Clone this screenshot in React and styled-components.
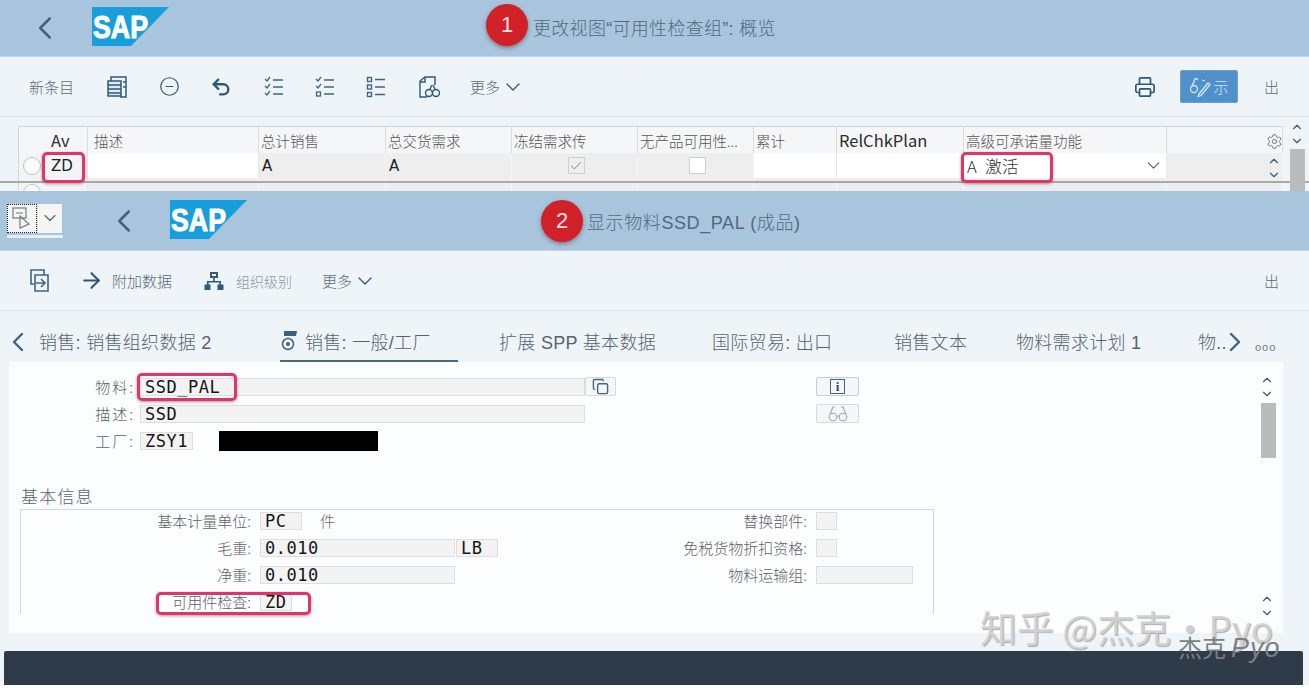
import React from 'react';
import styled, { createGlobalStyle } from 'styled-components';
import { ChevronLeft, ChevronRight, ChevronDown, ChevronUp, CircleMinus, Undo2, Printer, Settings, ArrowRight, Copy, Check } from 'lucide-react';

const cjk = '"Noto Sans CJK SC", "Noto Sans", sans-serif';
const latin = '"Liberation Sans", "Noto Sans CJK SC", sans-serif';
const mono = '"DejaVu Sans Mono", "Liberation Mono", monospace';

const GlobalStyle = createGlobalStyle`
  html, body { margin: 0; padding: 0; background: #fff; }
  body { font-family: ${cjk}; color: #56606b; }
`;

const Page = styled.div`
  position: relative;
  width: 1309px;
  height: 688px;
  overflow: hidden;
  background: #eff4f9;
`;

const Window = styled.section`
  position: relative;
  height: ${(p) => p.$h}px;
  overflow: hidden;
`;

const Shell = styled.header`
  display: flex;
  align-items: center;
  height: ${(p) => p.$h}px;
  background: #a9c5de;
  border-bottom: 1px solid #c4d6e6;
  box-sizing: border-box;
`;

const BackBtn = styled.span`
  display: flex;
  color: #3d6385;
  margin-left: ${(p) => p.$ml}px;
`;

const LogoBox = styled.svg`
  display: block;
  margin-left: ${(p) => p.$ml}px;
  margin-top: ${(p) => p.$mt || 0}px;
`;

const Title = styled.h1`
  margin: ${(p) => p.$mt || 0}px 0 0 ${(p) => p.$ml}px;
  font: 300 18px ${latin};
  letter-spacing: ${(p) => p.$ls}px;
  color: #4f6a80;
  white-space: nowrap;
`;

const Bar = styled.div`
  display: flex;
  align-items: center;
  height: 60px;
  padding-right: 30px;
  border-bottom: 1px solid #dbe4ea;
  box-sizing: border-box;
`;

const ToolText = styled.span`
  margin-left: ${(p) => p.$ml || 0}px;
  font-size: ${(p) => p.$size || 15}px;
  font-weight: 300;
  color: ${(p) => p.$color || '#5b6b78'};
  white-space: nowrap;
`;

const ToolIcon = styled.span`
  display: flex;
  margin-left: ${(p) => p.$ml}px;
  color: #2f5878;
`;

const Spacer = styled.div`
  flex: 1;
`;

const PrimaryBtn = styled.button`
  display: flex;
  align-items: center;
  justify-content: center;
  gap: 2px;
  width: 58px;
  height: 33px;
  margin: 0 26px 0 24px;
  padding: 0;
  border: 1px solid #6f9fc9;
  border-radius: 2px;
  background: #5090cb;
  color: #d7e8f7;
  font: 300 15px ${cjk};
`;

const TableArea = styled.div`
  display: flex;
  padding: 9px 4px 0 18px;
  height: 73px;
  box-sizing: border-box;
`;

const Table = styled.div`
  width: 1265px;
  display: grid;
  grid-template-columns: 69px 171px 127px 126px 126px 116px 83px 127px 203px 1fr;
  grid-template-rows: 26px 25px 30px;
  border-left: 1px solid #d5d5d5;
  border-top: 1px solid #d5d5d5;
  box-sizing: border-box;
`;

const HeadCell = styled.div`
  display: flex;
  align-items: center;
  padding-left: ${(p) => p.$pl || 2}px;
  background: #f5f6f7;
  border-right: 1px solid #dcdcdc;
  font-size: ${(p) => (p.$latin ? 16.5 : 14.5)}px;
  font-weight: ${(p) => (p.$latin ? 400 : 300)};
  color: ${(p) => (p.$latin ? '#2b2b2b' : '#555')};
  white-space: nowrap;
  overflow: hidden;
`;

const Cell = styled.div`
  display: flex;
  align-items: center;
  padding-left: 3px;
  box-sizing: border-box;
  justify-content: ${(p) => (p.$center ? 'center' : 'flex-start')};
  background: ${(p) => (p.$grey ? '#eeeeee' : '#fff')};
  border-right: 1px solid ${(p) => (p.$grey ? '#f6f6f6' : '#e6e6e6')};
  font: 15px "DejaVu Sans", sans-serif;
  color: #222;
`;

const SelectCell = styled(Cell)`
  gap: 10px;
  padding-left: 4px;
  background: #f3f4f5;
`;

const StatusText = styled.span`
  font: 300 16.5px ${cjk};
  letter-spacing: 0.4px;
  color: #333;
`;

const Radio = styled.span`
  flex: none;
  width: 18px;
  height: 18px;
  border-radius: 50%;
  border: 1px solid #bfc4c7;
  background: #fbfbfb;
  box-sizing: border-box;
`;

const CheckBox = styled.span`
  display: flex;
  align-items: center;
  justify-content: center;
  width: 17px;
  height: 17px;
  border: 1px solid #cfcfcf;
  background: ${(p) => (p.$off ? '#fff' : '#eee')};
  color: #777;
  box-sizing: border-box;
`;

const ChevronPair = styled.span`
  display: flex;
  flex-direction: column;
  align-items: center;
  color: #3b5a75;
`;

const ScrollRail = styled.div`
  position: absolute;
  left: ${(p) => p.$x}px;
  top: ${(p) => p.$y}px;
  width: 15px;
  height: ${(p) => p.$h}px;
  background: #b9bbbd;
`;

const OverlayChevrons = styled.div`
  position: absolute;
  left: ${(p) => p.$x}px;
  top: ${(p) => p.$y}px;
`;

const Seam = styled.div`
  position: absolute;
  left: 0;
  right: 0;
  top: 181px;
  height: 2px;
  background: #a9a9a6;
`;

const MenuControl = styled.div`
  display: flex;
  margin: 0 0 0 7px;
  width: 56px;
  height: 34px;
  border-bottom: 3px solid #e9eff5;
  box-sizing: border-box;
`;

const MenuIcon = styled.span`
  display: flex;
  align-items: center;
  justify-content: center;
  width: 30px;
  height: 29px;
  background: #f5f5f3;
  border: 1px dotted #222;
  box-sizing: border-box;
`;

const MenuArrow = styled.span`
  display: flex;
  align-items: center;
  justify-content: center;
  width: 25px;
  height: 29px;
  background: #f5f5f3;
  color: #47637a;
  border-left: 1px solid #ddd;
  box-sizing: border-box;
`;

const TabBar = styled.nav`
  display: flex;
  align-items: flex-end;
  height: 51px;
  padding-left: 2px;
  box-sizing: border-box;
`;

const TabChevron = styled.span`
  display: flex;
  margin-left: ${(p) => p.$ml || 0}px;
  margin-bottom: 4px;
  color: #3d6385;
`;

const Tab = styled.div`
  display: flex;
  align-items: center;
  flex: none;
  gap: 7px;
  height: 50px;
  padding: 10px 0 0 ${(p) => (p.$active ? 1 : 0)}px;
  margin-left: ${(p) => p.$ml || 0}px;
  width: ${(p) => p.$w}px;
  border-bottom: 2px solid ${(p) => (p.$active ? '#47677f' : 'transparent')};
  font: 300 18px ${latin};
  letter-spacing: 0.3px;
  color: #55646f;
  white-space: nowrap;
  box-sizing: border-box;
`;

const Sheet = styled.main`
  position: relative;
  margin-left: 9px;
  width: 1274px;
  height: 271px;
  padding: 16px 0 0 11px;
  background: #fcfdfe;
  box-sizing: border-box;
`;

const TopRows = styled.div`
  display: flex;
  flex-direction: column;
  gap: 10px;
  width: 840px;
`;

const Row = styled.div`
  display: flex;
  align-items: center;
  height: 17px;
`;

const Label = styled.label`
  flex: none;
  width: ${(p) => p.$w}px;
  padding-right: ${(p) => p.$pr || 7}px;
  box-sizing: border-box;
  text-align: right;
  font-size: 15px;
  font-weight: 300;
  letter-spacing: ${(p) => p.$ls || 0}px;
  color: #5d6367;
  white-space: nowrap;
`;

const Field = styled.span`
  display: flex;
  align-items: center;
  flex: none;
  width: ${(p) => p.$w}px;
  height: 18px;
  margin-left: ${(p) => p.$ml || 0}px;
  padding-left: 4px;
  box-sizing: border-box;
  background: #f3f3f3;
  border: 1px solid #dedede;
  font: 17px ${mono};
  color: #161616;
  letter-spacing: 0.5px;
`;

const IconBtn = styled.button`
  display: flex;
  align-items: center;
  justify-content: center;
  flex: none;
  width: ${(p) => p.$w}px;
  height: 19px;
  margin-left: ${(p) => p.$ml || 0}px;
  padding: 0;
  border: 1px solid ${(p) => (p.$muted ? '#dadada' : '#c7cdd2')};
  border-radius: 2px;
  background: #f5f6f7;
  color: ${(p) => (p.$muted ? '#98a9b6' : '#45657e')};
`;

const InfoGlyph = styled.span`
  display: block;
  width: 15px;
  height: 15px;
  border: 1px solid #45657e;
  box-sizing: border-box;
  font: bold 13px/13px "Liberation Serif", serif;
  color: #274a66;
  text-align: center;
`;

const Redacted = styled.span`
  width: 159px;
  height: 20px;
  margin-left: 26px;
  background: #000;
`;

const GroupTitle = styled.h2`
  margin: 36px 0 3px 1px;
  font-size: 17px;
  font-weight: 300;
  letter-spacing: 1.2px;
  line-height: 21px;
  color: #55626c;
`;

const GroupBox = styled.div`
  display: flex;
  width: 914px;
  height: 105px;
  border: 1px solid #d4d8da;
  border-bottom: 0;
  box-sizing: border-box;
  overflow: hidden;
`;

const GroupCol = styled.div`
  display: flex;
  flex-direction: column;
  gap: 10px;
  padding-top: 2px;
  width: ${(p) => p.$w}px;
  flex: none;
`;

const Unit = styled.span`
  margin-left: 18px;
  font-size: 15px;
  font-weight: 300;
  color: #666;
`;

const Dots = styled.span`
  margin: 0 0 9px 4px;
  color: #6b7b88;
  font: 11px/1 "Liberation Sans", sans-serif;
  letter-spacing: 1px;
`;

const Footer = styled.footer`
  margin: 18px 6px 0 4px;
  height: 34px;
  background: #2f3b48;
  border-radius: 2px 2px 0 0;
`;

const FooterGap = styled.div`
  position: absolute;
  left: 0;
  right: 0;
  bottom: 0;
  height: 3px;
  background: #fff;
`;

const Badge = styled.span`
  display: flex;
  flex: none;
  align-items: center;
  justify-content: center;
  width: 42px;
  height: 42px;
  margin: ${(p) => p.$mt || 0}px 0 0 ${(p) => p.$ml}px;
  border-radius: 50%;
  background: #cf2127;
  box-shadow: 0 2px 4px rgba(90, 60, 60, 0.55);
  color: #fbe4e1;
  font: 22px "Liberation Sans", sans-serif;
`;

const Mark = styled.div`
  position: absolute;
  left: ${(p) => p.$x}px;
  top: ${(p) => p.$y}px;
  width: ${(p) => p.$w}px;
  height: ${(p) => p.$h}px;
  border: 3px solid #e0356b;
  border-radius: 5px;
  box-sizing: border-box;
  box-shadow: 0 1px 3px rgba(90, 60, 70, 0.5);
`;

const WatermarkMain = styled.div`
  position: absolute;
  left: 980px;
  top: 602px;
  font-size: 37px;
  line-height: 50px;
  color: rgba(212, 212, 212, 0.9);
  text-shadow: 1px 1px 1px rgba(120, 120, 120, 0.6);
  white-space: nowrap;
`;

const WatermarkSub = styled.div`
  position: absolute;
  left: 1178px;
  top: 630px;
  font-size: 24px;
  line-height: 34px;
  color: #7b7f83;
  white-space: nowrap;
  span {
    margin-left: 5px;
    font: italic 27px "Liberation Sans", sans-serif;
    letter-spacing: 1px;
  }
`;

const SapLogo = ({ ml, mt }) => (
  <LogoBox $ml={ml} $mt={mt} width="77" height="39" viewBox="0 0 77 39">
    <polygon points="0,0 77,0 39,39 0,39" fill="#189fdb" />
    <text x="1" y="31" textLength="55" lengthAdjust="spacingAndGlyphs" fill="#fff" stroke="#fff" strokeWidth="1" fontFamily="Liberation Sans" fontWeight="700" fontSize="31">SAP</text>
  </LogoBox>
);

const ChecklistIcon = ({ last }) => (
  <svg width="20" height="22" viewBox="0 0 20 22" fill="none" stroke="#3f6482" strokeWidth="1.3">
    <path d="M1 3l2 2 3-4M1 10l2 2 3-4" />
    {last ? <rect x="1.5" y="16" width="4" height="4" /> : <path d="M1 17l2 2 3-4" />}
    <path d="M9 4h10M9 11h10M9 18h10" />
  </svg>
);

const BoxListIcon = () => (
  <svg width="20" height="22" viewBox="0 0 20 22" fill="none" stroke="#3f6482" strokeWidth="1.4">
    <rect x="1.5" y="1.5" width="4" height="4" />
    <rect x="1.5" y="9" width="4" height="4" />
    <rect x="1.5" y="16.5" width="4" height="4" />
    <path d="M9 3.5h10M9 11h10M9 18.5h10" />
  </svg>
);

const DocsIcon = () => (
  <svg width="22" height="24" viewBox="0 0 22 24" fill="none" stroke="#2f5878" strokeWidth="1.5">
    <path d="M5 6V2h9l4 0h2v20h-6" />
    <rect x="2" y="6" width="13" height="15" fill="#dfe8ef" />
    <path d="M2 10h13M2 14h13M2 18h13M17 7h3M17 12h3" />
  </svg>
);

const DocGlassIcon = () => (
  <svg width="22" height="24" viewBox="0 0 22 24" fill="none" stroke="#2f5878" strokeWidth="1.4">
    <path d="M9 22H2V6l5-4h10v8" />
    <path d="M2 7h5V2" />
    <circle cx="11" cy="18" r="3.5" />
    <circle cx="18" cy="18" r="3.5" />
    <path d="M12 14l2-4M17 14l-2-4" />
  </svg>
);

const SwitchIcon = () => (
  <svg width="21" height="23" viewBox="0 0 21 23" fill="none" stroke="#3f6482" strokeWidth="1.6">
    <path d="M5 15H2V1h13v5" />
    <path d="M6 6h13v16H6zM7 14h9M12 10l4 4-4 4" />
  </svg>
);

const OrgIcon = () => (
  <svg width="20" height="20" viewBox="0 0 20 20" fill="#33597a">
    <path d="M6 1h8v6H6zM8 3v2h4V3zM9.2 7h1.600v3H17v4h-1.600v-2.400H4.600V14H3v-4h6.200z" fillRule="evenodd" />
    <rect x="0.5" y="13.5" width="6" height="5.5" />
    <rect x="13.5" y="13.5" width="6" height="5.5" />
  </svg>
);

const WheelIcon = () => (
  <svg width="17" height="22" viewBox="0 0 17 22" fill="none">
    <path d="M3 1h13l-1 5H3z" fill="#3c5f7c" />
    <circle cx="7" cy="14" r="5.5" stroke="#3c5f7c" strokeWidth="1.5" />
    <circle cx="7" cy="14" r="2" fill="#3c5f7c" />
  </svg>
);

const MenuGlyph = () => (
  <svg width="22" height="24" viewBox="0 0 22 24" fill="none" stroke="#6f7d88" strokeWidth="1.2">
    <rect x="2" y="2" width="13" height="10" />
    <path d="M5 7h7M9 12v6M9 10l9 8-9 4z" />
  </svg>
);

const PenGlassIcon = () => (
  <svg width="22" height="20" viewBox="0 0 22 20" fill="none" stroke="#d7e8f7" strokeWidth="1.3">
    <circle cx="5" cy="12" r="3.5" />
    <path d="M3 9l3-7h3" />
    <path d="M10 17l9-11 2 1.500-9 11-3 1zM13 3l3 1" />
  </svg>
);

const GlassesIcon = () => (
  <svg width="20" height="16" viewBox="0 0 20 16" fill="none" stroke="currentColor" strokeWidth="1.1">
    <circle cx="5" cy="11" r="3.800" />
    <circle cx="15" cy="11" r="3.800" />
    <path d="M2 8l3-7h2M18 8l-3-7h-2M8.500 10h3" />
  </svg>
);

const headers = ['总计销售', '总交货需求', '冻结需求传', '无产品可用性...', '累计'];

const App = () => (
  <Page>
    <GlobalStyle />

    <Window $h={191}>
      <Shell $h={57}>
        <BackBtn $ml={26}><ChevronLeft size={38} strokeWidth={1.6} /></BackBtn>
        <SapLogo ml={28} mt={-3} />
        <Badge $ml={317} $mt={-6}>1</Badge>
        <Title $ml={5} $mt={-3} $ls={0.3}>更改视图“可用性检查组”: 概览</Title>
      </Shell>
      <Bar>
        <ToolText $ml={29}>新条目</ToolText>
        <ToolIcon $ml={32}><DocsIcon /></ToolIcon>
        <ToolIcon $ml={31}><CircleMinus size={21} strokeWidth={1.4} /></ToolIcon>
        <ToolIcon $ml={30}><Undo2 size={22} strokeWidth={2.6} /></ToolIcon>
        <ToolIcon $ml={32}><ChecklistIcon /></ToolIcon>
        <ToolIcon $ml={31}><ChecklistIcon last /></ToolIcon>
        <ToolIcon $ml={31}><BoxListIcon /></ToolIcon>
        <ToolIcon $ml={32}><DocGlassIcon /></ToolIcon>
        <ToolText $ml={30}>更多</ToolText>
        <ToolIcon $ml={1}><ChevronDown size={24} strokeWidth={1.3} /></ToolIcon>
        <Spacer />
        <ToolIcon $ml={0}><Printer size={22} strokeWidth={1.8} /></ToolIcon>
        <PrimaryBtn><PenGlassIcon />示</PrimaryBtn>
        <ToolText>出</ToolText>
      </Bar>
      <TableArea>
        <Table>
          <HeadCell $latin $pl={32}>Av</HeadCell>
          <HeadCell $pl={6}>描述</HeadCell>
          {headers.map((h) => <HeadCell key={h}>{h}</HeadCell>)}
          <HeadCell $latin>RelChkPlan</HeadCell>
          <HeadCell>高级可承诺量功能</HeadCell>
          <HeadCell />

          <SelectCell><Radio />ZD</SelectCell>
          <Cell />
          <Cell $grey>A</Cell>
          <Cell $grey>A</Cell>
          <Cell $grey $center><CheckBox><Check size={14} strokeWidth={1.5} /></CheckBox></Cell>
          <Cell $grey $center><CheckBox $off /></Cell>
          <Cell />
          <Cell />
          <Cell><StatusText>A&nbsp;&nbsp;激活</StatusText><Spacer /><ChevronDown size={21} strokeWidth={1.3} color="#3f6482" style={{ marginRight: 2 }} /></Cell>
          <Cell $grey />

          <SelectCell><Radio /></SelectCell>
          <Cell $grey />
          <Cell $grey />
          <Cell $grey />
          <Cell $grey />
          <Cell $grey />
          <Cell $grey />
          <Cell $grey />
          <Cell $grey />
          <Cell $grey />
        </Table>
      </TableArea>
      <Seam />
      <OverlayChevrons $x={1266} $y={131}><Settings size={17} color="#47677f" strokeWidth={1.2} /></OverlayChevrons>
      <OverlayChevrons $x={1267} $y={154}>
        <ChevronPair><ChevronUp size={14} strokeWidth={2} /><ChevronDown size={14} strokeWidth={2} /></ChevronPair>
      </OverlayChevrons>
      <OverlayChevrons $x={1290} $y={120}>
        <ChevronPair><ChevronUp size={14} strokeWidth={2} /><ChevronDown size={14} strokeWidth={2} /></ChevronPair>
      </OverlayChevrons>
      <ScrollRail $x={1290} $y={149} $h={42} />
    </Window>

    <Shell $h={60}>
      <MenuControl>
        <MenuIcon><MenuGlyph /></MenuIcon>
        <MenuArrow><ChevronDown size={20} strokeWidth={1.3} /></MenuArrow>
      </MenuControl>
      <BackBtn $ml={42}><ChevronLeft size={38} strokeWidth={1.6} /></BackBtn>
      <SapLogo ml={27} mt={-3} />
      <Badge $ml={294}>2</Badge>
      <Title $ml={4} $ls={0.6}>显示物料SSD_PAL (成品)</Title>
    </Shell>
    <Bar>
      <ToolIcon $ml={29}><SwitchIcon /></ToolIcon>
      <ToolIcon $ml={29}><ArrowRight size={25} strokeWidth={2} /></ToolIcon>
      <ToolText $ml={8}>附加数据</ToolText>
      <ToolIcon $ml={32}><OrgIcon /></ToolIcon>
      <ToolText $ml={12} $size={14} $color="#8b97a1">组织级别</ToolText>
      <ToolText $ml={30}>更多</ToolText>
      <ToolIcon $ml={1}><ChevronDown size={24} strokeWidth={1.3} /></ToolIcon>
      <Spacer />
      <ToolText>出</ToolText>
    </Bar>
    <TabBar>
      <TabChevron><ChevronLeft size={32} strokeWidth={1.8} /></TabChevron>
      <Tab $ml={5} $w={241}>销售: 销售组织数据 2</Tab>
      <Tab $active $w={178}><WheelIcon />销售: 一般/工厂</Tab>
      <Tab $ml={41} $w={213}>扩展 SPP 基本数据</Tab>
      <Tab $w={182}>国际贸易: 出口</Tab>
      <Tab $w={122}>销售文本</Tab>
      <Tab $w={182}>物料需求计划 1</Tab>
      <Tab $w={30}>物..</Tab>
      <TabChevron $ml={-9}><ChevronRight size={32} strokeWidth={1.8} /></TabChevron>
      <Dots>ooo</Dots>
    </TabBar>
    <Sheet>
      <TopRows>
        <Row>
          <Label $w={120} $ls={2} $pr={5}>物料:</Label>
          <Field $w={445}>SSD_PAL</Field>
          <IconBtn $w={31} $muted><Copy size={17} color="#45657e" /></IconBtn>
          <IconBtn $w={43} $ml={200}><InfoGlyph>i</InfoGlyph></IconBtn>
        </Row>
        <Row>
          <Label $w={120} $ls={2} $pr={5}>描述:</Label>
          <Field $w={445}>SSD</Field>
          <IconBtn $w={43} $muted $ml={231}><GlassesIcon /></IconBtn>
        </Row>
        <Row>
          <Label $w={120} $ls={2} $pr={5}>工厂:</Label>
          <Field $w={53}>ZSY1</Field>
          <Redacted />
        </Row>
      </TopRows>
      <GroupTitle>基本信息</GroupTitle>
      <GroupBox>
        <GroupCol $w={600}>
          <Row>
            <Label $w={239} $pr={9}>基本计量单位:</Label>
            <Field $w={42}>PC</Field>
            <Unit>件</Unit>
          </Row>
          <Row>
            <Label $w={239} $pr={9}>毛重:</Label>
            <Field $w={195}>0.010</Field>
            <Field $w={42} $ml={1}>LB</Field>
          </Row>
          <Row>
            <Label $w={239} $pr={9}>净重:</Label>
            <Field $w={195}>0.010</Field>
          </Row>
          <Row>
            <Label $w={239} $pr={9}>可用件检查:</Label>
            <Field $w={32}>ZD</Field>
          </Row>
        </GroupCol>
        <GroupCol $w={300}>
          <Row>
            <Label $w={195} $pr={9}>替换部件:</Label>
            <Field $w={21} />
          </Row>
          <Row>
            <Label $w={195} $pr={9}>免税货物折扣资格:</Label>
            <Field $w={21} />
          </Row>
          <Row>
            <Label $w={195} $pr={9}>物料运输组:</Label>
            <Field $w={97} />
          </Row>
        </GroupCol>
      </GroupBox>
      <OverlayChevrons $x={1251} $y={11}>
        <ChevronPair><ChevronUp size={14} strokeWidth={2} /><ChevronDown size={14} strokeWidth={2} /></ChevronPair>
      </OverlayChevrons>
      <ScrollRail $x={1252} $y={41} $h={55} />
      <OverlayChevrons $x={1251} $y={230}>
        <ChevronPair><ChevronUp size={14} strokeWidth={2} /><ChevronDown size={14} strokeWidth={2} /></ChevronPair>
      </OverlayChevrons>
    </Sheet>
    <Footer />
    <FooterGap />

    <Mark $x={42} $y={152} $w={43} $h={31} />
    <Mark $x={961} $y={152} $w={92} $h={31} />
    <Mark $x={137} $y={373} $w={100} $h={28} />
    <Mark $x={156} $y={592} $w={155} $h={23} />
    <WatermarkMain>知乎 @杰克·Pyo</WatermarkMain>
    <WatermarkSub>杰克<span>Pyo</span></WatermarkSub>
  </Page>
);

export default App;
